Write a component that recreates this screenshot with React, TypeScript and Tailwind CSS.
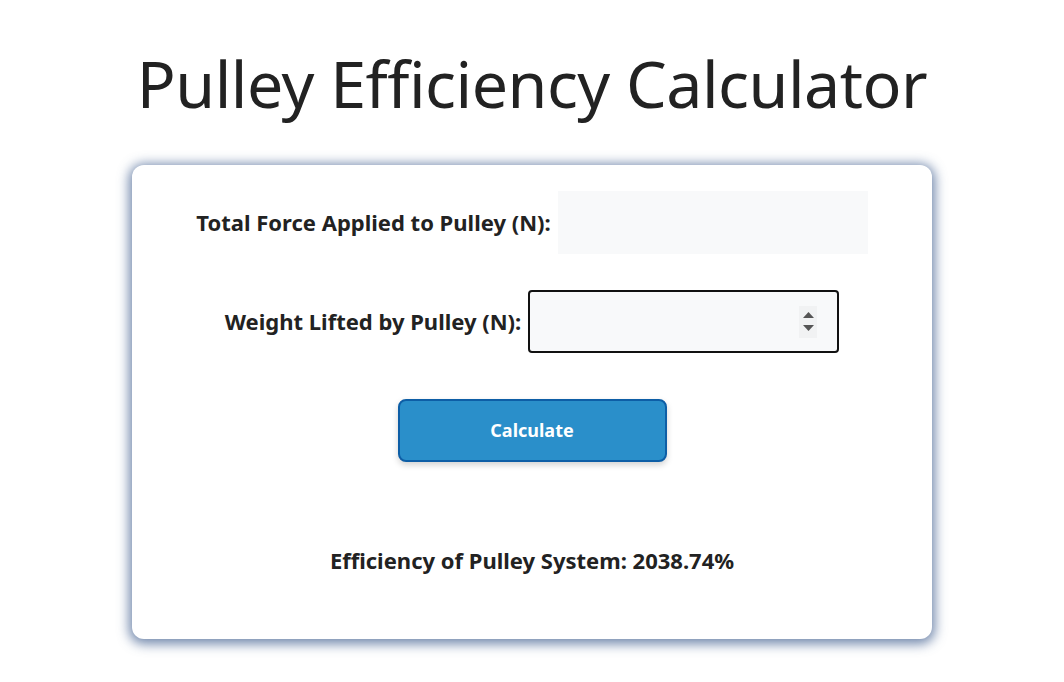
function Spinner() {
  return (
    <div className="absolute right-[22px] top-1/2 -translate-y-1/2 flex h-[32px] w-[18px] flex-col items-center justify-center gap-[7px] bg-[#f1f2f3]">
      <svg width="11" height="6" viewBox="0 0 11 6"><path d="M0 6 L5.5 0 L11 6 Z" fill="#555" /></svg>
      <svg width="11" height="6" viewBox="0 0 11 6"><path d="M0 0 L5.5 6 L11 0 Z" fill="#555" /></svg>
    </div>
  );
}

export default function App() {
  const force = '';
  const weight = '';

  return (
    <div className="min-h-[682px] bg-white font-['Noto_Sans',sans-serif] text-[#222]">
      <h1 className="pt-[38px] text-center text-[64.5px] leading-[90px] font-normal tracking-[-0.5px]">
        Pulley Efficiency Calculator
      </h1>

      <div className="mx-auto mt-[37px] w-[800px] rounded-[12px] bg-white pt-[26px] pb-[62px] shadow-[0_2px_12px_3px_rgba(60,90,140,0.72)]">
        <div className="flex items-center justify-center gap-[7px]">
          <label className="text-[22px] font-bold">Total Force Applied to Pulley (N):</label>
          <input
            type="text"
            defaultValue={force}
            className="h-[63px] w-[310px] bg-[#f8f9fa] px-3 outline-none"
          />
        </div>

        <div className="mt-[36px] flex items-center justify-center gap-[7px]">
          <label className="text-[22px] font-bold">Weight Lifted by Pulley (N):</label>
          <div className="relative">
            <input
              type="text"
              defaultValue={weight}
              className="h-[63px] w-[311px] rounded-[4px] border-2 border-[#111] bg-[#f8f9fa] px-3 outline-none"
            />
            <Spinner />
          </div>
        </div>

        <div className="mt-[46px] flex justify-center">
          <button className="h-[63px] w-[269px] rounded-[8px] border-2 border-[#0d5ea6] bg-[#2a8fca] text-[18px] font-bold text-white shadow-[0_3px_6px_rgba(0,0,0,0.18)]">
            Calculate
          </button>
        </div>

        <p className="mt-[82px] text-center text-[22px] font-bold">
          Efficiency of Pulley System: 2038.74%
        </p>
      </div>
    </div>
  );
}
